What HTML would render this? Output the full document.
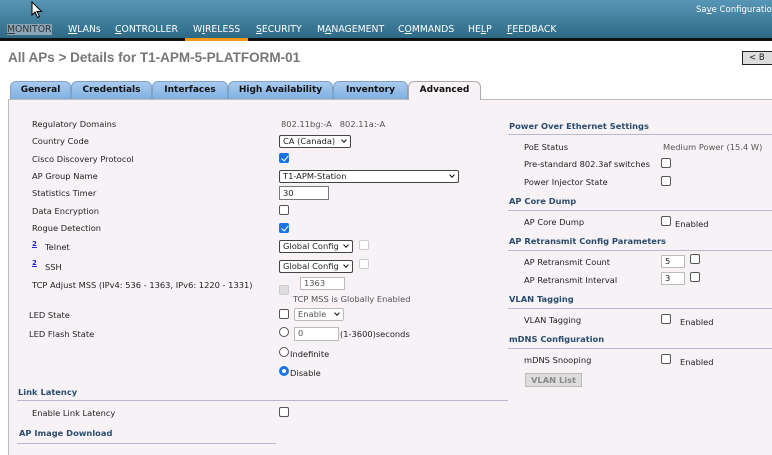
<!DOCTYPE html>
<html><head><meta charset="utf-8"><style>
*{margin:0;padding:0;box-sizing:border-box}
body{width:772px;height:455px;overflow:hidden;background:#fff;font-family:"DejaVu Sans","Liberation Sans",sans-serif;font-size:8.3px;color:#222;position:relative}
.a{position:absolute;white-space:nowrap}
#hdr{position:absolute;left:0;top:0;width:772px;height:38px;background:linear-gradient(#5796b6,#2e6a86)}
#blk{position:absolute;left:0;top:38px;width:772px;height:3px;background:#111}
.m{position:absolute;top:24px;color:#fff;font-size:9.3px;text-decoration:none}
.m u{text-decoration:underline}
.tab{position:absolute;top:81px;height:18px;background:linear-gradient(#a9cbef,#7fb0e2);border:1px solid #7fa2c6;border-bottom:none;border-radius:6px 6px 0 0;font-weight:bold;font-size:9px;text-align:center;line-height:17px;color:#111}
#panel{position:absolute;left:8px;top:99px;width:764px;height:356px;background:#f6f2f6;border-left:1px solid #bbb;border-top:1px solid #bbb}
.cb{position:absolute;width:10px;height:10px;border:1px solid #555;border-radius:2px;background:#fff}
.ck{background:#1a73e8;border-color:#1a73e8}
.ck:after{content:"";position:absolute;left:2.5px;top:0px;width:3px;height:6px;border:solid #fff;border-width:0 1.5px 1.5px 0;transform:rotate(40deg)}
.sel{position:absolute;height:13px;border:1px solid #444;border-radius:2px;background:#fff;font-size:8.3px;line-height:11px;padding-left:3px}
.sel:after{content:"";position:absolute;right:4px;top:2px;width:3px;height:3px;border:solid #111;border-width:0 1.5px 1.5px 0;transform:rotate(45deg)}
.inp{position:absolute;height:13px;border:1px solid #777;background:#fff;line-height:11px;padding-left:3px}
.h{position:absolute;font-weight:bold;color:#2a4d6e;font-size:8.3px}
.ln{position:absolute;height:1px;background:#b8b8d0}
.rad{position:absolute;width:10px;height:10px;border:1px solid #555;border-radius:50%;background:#fff}
.g{color:#555}
</style></head><body>
<div id="hdr"></div><div id="blk"></div>
<svg class="a" style="left:31px;top:1px" width="12" height="18" viewBox="0 0 12 18"><path d="M1 1 L1 14 L4 11 L6.5 16.5 L8.5 15.5 L6 10.5 L10.5 10.5 Z" fill="#fff" stroke="#000" stroke-width="1"/></svg>
<div class="a" style="left:696px;top:5px;color:#fff;font-size:8.5px">Sa<u>v</u>e Configuration</div>
<div class="m" style="left:7px;color:#333;background:#8aa6b8"><u>M</u>ONITOR</div>
<div class="m" style="left:68px"><u>W</u>LANs</div>
<div class="m" style="left:115px"><u>C</u>ONTROLLER</div>
<div class="m" style="left:193px">W<u>I</u>RELESS</div>
<div class="a" style="left:185px;top:38px;width:63px;height:3px;background:#f39a1e"></div>
<div class="m" style="left:256px"><u>S</u>ECURITY</div>
<div class="m" style="left:317px">M<u>A</u>NAGEMENT</div>
<div class="m" style="left:398px">C<u>O</u>MMANDS</div>
<div class="m" style="left:468px">HE<u>L</u>P</div>
<div class="m" style="left:507px"><u>F</u>EEDBACK</div>
<div class="a" style="left:8px;top:50px;font-family:'Liberation Sans',sans-serif;font-weight:bold;font-size:13.5px;color:#777">All APs &gt; Details for T1-APM-5-PLATFORM-01</div>
<div class="a" style="left:742px;top:51px;width:32px;height:14px;border:1px solid #222;background:#ddd;font-size:8.5px;padding-left:6px;line-height:12px">&lt; B</div>
<div id="panel"></div>
<div class="tab" style="left:10px;width:61px">General</div>
<div class="tab" style="left:71px;width:81px">Credentials</div>
<div class="tab" style="left:152px;width:76px">Interfaces</div>
<div class="tab" style="left:228px;width:105px">High Availability</div>
<div class="tab" style="left:333px;width:75px">Inventory</div>
<div class="tab" style="left:408px;width:73px;background:#f6f2f6;border-color:#aaa;height:19px">Advanced</div>

<div class="a" style="left:32px;top:119px">Regulatory Domains</div>
<div class="a g" style="left:281px;top:119px">802.11bg:-A &nbsp;&nbsp;802.11a:-A</div>
<div class="a" style="left:32px;top:136px">Country Code</div>
<div class="sel" style="left:279px;top:135px;width:72px">CA (Canada)</div>
<div class="a" style="left:32px;top:154px">Cisco Discovery Protocol</div>
<div class="cb ck" style="left:279px;top:153px"></div>
<div class="a" style="left:32px;top:171px">AP Group Name</div>
<div class="sel" style="left:279px;top:170px;width:180px">T1-APM-Station</div>
<div class="a" style="left:32px;top:188px">Statistics Timer</div>
<div class="inp" style="left:279px;top:186px;width:50px;height:14px;line-height:12px">30</div>
<div class="a" style="left:32px;top:206px">Data Encryption</div>
<div class="cb" style="left:279px;top:205px"></div>
<div class="a" style="left:32px;top:223px">Rogue Detection</div>
<div class="cb ck" style="left:279px;top:223px"></div>
<div class="a" style="left:32px;top:240px;color:#22c;font-weight:bold;font-size:7px;text-decoration:underline">2</div>
<div class="a" style="left:45px;top:242px">Telnet</div>
<div class="sel" style="left:279px;top:240px;width:74px">Global Config</div>
<div class="cb" style="left:359px;top:240px;border-color:#ccc"></div>
<div class="a" style="left:32px;top:259px;color:#22c;font-weight:bold;font-size:7px;text-decoration:underline">2</div>
<div class="a" style="left:45px;top:262px">SSH</div>
<div class="sel" style="left:279px;top:260px;width:74px">Global Config</div>
<div class="cb" style="left:359px;top:259px;border-color:#ccc"></div>
<div class="a" style="left:32px;top:280px">TCP Adjust MSS (IPv4: 536 - 1363, IPv6: 1220 - 1331)</div>
<div class="cb" style="left:279px;top:285px;background:#ddd;border-color:#ccc"></div>
<div class="inp g" style="left:300px;top:277px;width:45px;border-color:#bbb">1363</div>
<div class="a g" style="left:293px;top:294px">TCP MSS is Globally Enabled</div>
<div class="a" style="left:29px;top:310px">LED State</div>
<div class="cb" style="left:279px;top:309px"></div>
<div class="sel g" style="left:294px;top:308px;width:50px;border-color:#bbb">Enable</div>
<div class="a" style="left:29px;top:329px">LED Flash State</div>
<div class="rad" style="left:279px;top:327px"></div>
<div class="inp g" style="left:294px;top:327px;width:45px;height:14px;border-color:#bbb">0</div>
<div class="a" style="left:340px;top:329px">(1-3600)seconds</div>
<div class="rad" style="left:279px;top:347px"></div>
<div class="a" style="left:290px;top:349px">Indefinite</div>
<div class="rad" style="left:279px;top:366px;border:3px solid #1a73e8"></div>
<div class="a" style="left:290px;top:368px">Disable</div>
<div class="h" style="left:18px;top:387px">Link Latency</div>
<div class="ln" style="left:17px;top:400px;width:491px"></div>
<div class="a" style="left:32px;top:408px">Enable Link Latency</div>
<div class="cb" style="left:279px;top:407px"></div>
<div class="h" style="left:19px;top:428px">AP Image Download</div>
<div class="ln" style="left:17px;top:443px;width:259px"></div>

<div class="h" style="left:509px;top:121px">Power Over Ethernet Settings</div>
<div class="ln" style="left:508px;top:134px;width:264px"></div>
<div class="a" style="left:524px;top:142px">PoE Status</div>
<div class="a g" style="left:663px;top:142px">Medium Power (15.4 W)</div>
<div class="a" style="left:524px;top:159px">Pre-standard 802.3af switches</div>
<div class="cb" style="left:661px;top:158px"></div>
<div class="a" style="left:524px;top:177px">Power Injector State</div>
<div class="cb" style="left:661px;top:176px"></div>
<div class="h" style="left:509px;top:196px">AP Core Dump</div>
<div class="ln" style="left:508px;top:210px;width:264px"></div>
<div class="a" style="left:524px;top:217px">AP Core Dump</div>
<div class="cb" style="left:661px;top:216px"></div>
<div class="a" style="left:675px;top:219px">Enabled</div>
<div class="h" style="left:509px;top:236px">AP Retransmit Config Parameters</div>
<div class="ln" style="left:508px;top:250px;width:264px"></div>
<div class="a" style="left:524px;top:257px">AP Retransmit Count</div>
<div class="inp" style="left:661px;top:255px;width:24px;border-color:#bbb">5</div>
<div class="cb" style="left:690px;top:254px"></div>
<div class="a" style="left:524px;top:275px">AP Retransmit Interval</div>
<div class="inp" style="left:661px;top:272px;width:24px;border-color:#bbb">3</div>
<div class="cb" style="left:690px;top:272px"></div>
<div class="h" style="left:509px;top:294px">VLAN Tagging</div>
<div class="ln" style="left:508px;top:308px;width:264px"></div>
<div class="a" style="left:524px;top:315px">VLAN Tagging</div>
<div class="cb" style="left:661px;top:314px"></div>
<div class="a" style="left:680px;top:317px">Enabled</div>
<div class="h" style="left:509px;top:334px">mDNS Configuration</div>
<div class="ln" style="left:508px;top:348px;width:264px"></div>
<div class="a" style="left:524px;top:355px">mDNS Snooping</div>
<div class="cb" style="left:661px;top:354px"></div>
<div class="a" style="left:680px;top:357px">Enabled</div>
<div class="a" style="left:525px;top:373px;width:57px;height:14px;background:#ddd;border:1px solid #bbb;color:#888;font-weight:bold;text-align:center;line-height:12px">VLAN List</div>
</body></html>
